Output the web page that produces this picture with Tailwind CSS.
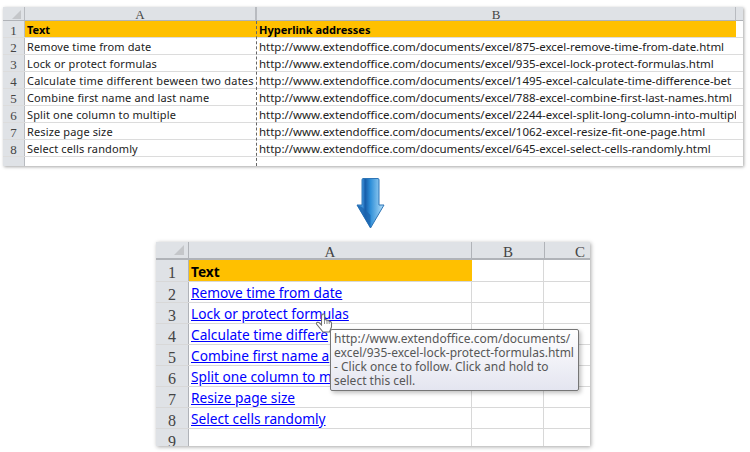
<!DOCTYPE html>
<html><head><meta charset="utf-8"><script src="https://cdn.jsdelivr.net/npm/@tailwindcss/browser@4"></script></head>
<body class="bg-white w-[750px] h-[452px] overflow-hidden font-['Noto_Sans',sans-serif] text-[#222]">
<div class="flex flex-col items-start h-full relative">
<!-- top sheet -->
<div class="relative mt-[7px] ml-[3px] w-[740px] h-[159px] shadow-[1px_1px_3px_rgba(0,0,0,0.35)] bg-white text-[11px] overflow-hidden leading-[18px]">
  <div class="flex h-[14px] bg-[#dfe2e6] border-b border-[#b0b3b8] font-['Liberation_Serif',serif] text-[13px] text-[#444]">
    <div class="w-[22px] border-r border-[#b8bbc0] relative"><svg class="absolute right-[3px] bottom-[1px]" width="9" height="9"><polygon points="9,0 9,9 0,9" fill="#c4c6c9"/></svg></div>
    <div class="w-[232px] border-r-2 border-[#b8bbc0] text-center leading-[15px]">A</div>
    <div class="w-[479px] border-r border-[#b8bbc0] text-center leading-[15px]">B</div>
  </div>
  <div class="flex h-[17px] border-b border-[#dcdcdc]"><div class="w-[22px] border-r border-[#b8bbc0] bg-[#dfe2e6] font-['Liberation_Serif',serif] text-[13px] leading-[20px] text-center text-[#444]">1</div><div class="w-[711px] flex bg-[#ffc000] font-bold text-black"><div class="w-[232px] pl-[2px]">Text</div><div class="pl-[2px]">Hyperlink addresses</div></div></div>
  <div class="flex h-[17px] border-b border-[#dcdcdc]"><div class="w-[22px] border-r border-[#b8bbc0] bg-[#dfe2e6] font-['Liberation_Serif',serif] text-[13px] leading-[20px] text-center text-[#444]">2</div><div class="w-[232px] pl-[2px] whitespace-nowrap tracking-[0.13px]">Remove time from date</div><div class="w-[479px] pl-[2px] whitespace-nowrap overflow-hidden text-[11.5px] tracking-[-0.02px]">http://www.extendoffice.com/documents/excel/875-excel-remove-time-from-date.html</div></div>
  <div class="flex h-[17px] border-b border-[#dcdcdc]"><div class="w-[22px] border-r border-[#b8bbc0] bg-[#dfe2e6] font-['Liberation_Serif',serif] text-[13px] leading-[20px] text-center text-[#444]">3</div><div class="w-[232px] pl-[2px] whitespace-nowrap tracking-[0.13px]">Lock or protect formulas</div><div class="w-[479px] pl-[2px] whitespace-nowrap overflow-hidden text-[11.5px] tracking-[-0.02px]">http://www.extendoffice.com/documents/excel/935-excel-lock-protect-formulas.html</div></div>
  <div class="flex h-[17px] border-b border-[#dcdcdc]"><div class="w-[22px] border-r border-[#b8bbc0] bg-[#dfe2e6] font-['Liberation_Serif',serif] text-[13px] leading-[20px] text-center text-[#444]">4</div><div class="w-[232px] pl-[2px] whitespace-nowrap tracking-[0.22px]">Calculate time different beween two dates</div><div class="w-[479px] pl-[2px] whitespace-nowrap overflow-hidden text-[11.5px] tracking-[-0.02px]">http://www.extendoffice.com/documents/excel/1495-excel-calculate-time-difference-bet</div></div>
  <div class="flex h-[17px] border-b border-[#dcdcdc]"><div class="w-[22px] border-r border-[#b8bbc0] bg-[#dfe2e6] font-['Liberation_Serif',serif] text-[13px] leading-[20px] text-center text-[#444]">5</div><div class="w-[232px] pl-[2px] whitespace-nowrap tracking-[0.13px]">Combine first name and last name</div><div class="w-[479px] pl-[2px] whitespace-nowrap overflow-hidden text-[11.5px] tracking-[-0.02px]">http://www.extendoffice.com/documents/excel/788-excel-combine-first-last-names.html</div></div>
  <div class="flex h-[17px] border-b border-[#dcdcdc]"><div class="w-[22px] border-r border-[#b8bbc0] bg-[#dfe2e6] font-['Liberation_Serif',serif] text-[13px] leading-[20px] text-center text-[#444]">6</div><div class="w-[232px] pl-[2px] whitespace-nowrap tracking-[0.13px]">Split one column to multiple</div><div class="w-[479px] pl-[2px] whitespace-nowrap overflow-hidden text-[11.5px] tracking-[-0.02px]">http://www.extendoffice.com/documents/excel/2244-excel-split-long-column-into-multipl</div></div>
  <div class="flex h-[17px] border-b border-[#dcdcdc]"><div class="w-[22px] border-r border-[#b8bbc0] bg-[#dfe2e6] font-['Liberation_Serif',serif] text-[13px] leading-[20px] text-center text-[#444]">7</div><div class="w-[232px] pl-[2px] whitespace-nowrap tracking-[0.13px]">Resize page size</div><div class="w-[479px] pl-[2px] whitespace-nowrap overflow-hidden text-[11.5px] tracking-[-0.02px]">http://www.extendoffice.com/documents/excel/1062-excel-resize-fit-one-page.html</div></div>
  <div class="flex h-[17px] border-b border-[#dcdcdc]"><div class="w-[22px] border-r border-[#b8bbc0] bg-[#dfe2e6] font-['Liberation_Serif',serif] text-[13px] leading-[20px] text-center text-[#444]">8</div><div class="w-[232px] pl-[2px] whitespace-nowrap tracking-[0.13px]">Select cells randomly</div><div class="w-[479px] pl-[2px] whitespace-nowrap overflow-hidden text-[11.5px] tracking-[-0.02px]">http://www.extendoffice.com/documents/excel/645-excel-select-cells-randomly.html</div></div>
  <div class="flex h-[9px]"><div class="w-[22px] border-r border-[#b8bbc0] bg-[#dfe2e6]"></div></div>
  <div class="absolute left-[253px] top-[14px] bottom-0 border-l border-dashed border-[#666]"></div>
</div>
<!-- arrow -->
<svg class="mt-[11px] ml-[356px]" width="29" height="52" viewBox="0 0 29 52">
  <defs><linearGradient id="g" x1="0" x2="1" y1="0" y2="0"><stop offset="0.2" stop-color="#3f94dc"/><stop offset="0.3" stop-color="#165ca8"/><stop offset="0.5" stop-color="#2f8fd8"/><stop offset="1" stop-color="#b8e2fb"/></linearGradient></defs>
  <path d="M7 1.5 H22 Q23 1.5 23 3 V28 H28 L14.5 51 L1 28 H6 V3 Q6 1.5 7 1.5 Z" fill="url(#g)" stroke="#2e75b6" stroke-width="1"/>
  <path d="M1 28 L14.5 51 L14.5 38 L6 30 Z" fill="#1c64ad" opacity="0.75"/>
</svg>
<!-- bottom sheet -->
<div class="relative mt-[13px] ml-[156px] w-[434px] h-[204px] shadow-[1px_1px_4px_rgba(0,0,0,0.35)] bg-white text-[13.7px] overflow-hidden leading-[22px]">
  <div class="flex h-[18px] bg-[#dfe2e6] border-b-2 border-[#b0b3b8] font-['Liberation_Serif',serif] text-[15px] text-[#444]">
    <div class="w-[33px] border-r border-[#b0b3b8] relative"><svg class="absolute right-[4px] bottom-[3px]" width="10" height="10"><polygon points="10,0 10,10 0,10" fill="#c4c6c9"/></svg></div>
    <div class="w-[282px] text-center leading-[20px]">A</div>
    <div class="w-[73px] border-l border-[#b0b3b8] text-center leading-[20px]">B</div>
    <div class="w-[46px] border-l border-[#b0b3b8] text-right pr-[5px] leading-[20px]">C</div>
  </div>
  <div class="flex h-[22px] border-b border-[#d8d8d8]"><div class="w-[33px] border-r border-[#b0b3b8] bg-[#dfe2e6] font-['Liberation_Serif',serif] text-[16px] leading-[25px] text-center text-[#444]">1</div><div class="w-[283px] pl-[2px] bg-[#ffc000] font-bold text-black leading-[23px]">Text</div><div class="w-[72px] border-r border-[#d8d8d8]"></div><div class="flex-1"></div></div>
  <div class="flex h-[21px] border-b border-[#d8d8d8]"><div class="w-[33px] border-r border-[#b0b3b8] bg-[#dfe2e6] font-['Liberation_Serif',serif] text-[16px] leading-[25px] text-center text-[#444]">2</div><div class="w-[283px] border-r border-[#d8d8d8] pl-[2px] whitespace-nowrap text-[#0000ff] underline">Remove time from date</div><div class="w-[72px] border-r border-[#d8d8d8]"></div><div class="flex-1"></div></div>
  <div class="flex h-[21px] border-b border-[#d8d8d8]"><div class="w-[33px] border-r border-[#b0b3b8] bg-[#dfe2e6] font-['Liberation_Serif',serif] text-[16px] leading-[25px] text-center text-[#444]">3</div><div class="w-[283px] border-r border-[#d8d8d8] pl-[2px] whitespace-nowrap text-[#0000ff] underline">Lock or protect formulas</div><div class="w-[72px] border-r border-[#d8d8d8]"></div><div class="flex-1"></div></div>
  <div class="flex h-[21px] border-b border-[#d8d8d8]"><div class="w-[33px] border-r border-[#b0b3b8] bg-[#dfe2e6] font-['Liberation_Serif',serif] text-[16px] leading-[25px] text-center text-[#444]">4</div><div class="w-[283px] border-r border-[#d8d8d8] pl-[2px] whitespace-nowrap text-[#0000ff] underline">Calculate time differe</div><div class="w-[72px] border-r border-[#d8d8d8]"></div><div class="flex-1"></div></div>
  <div class="flex h-[21px] border-b border-[#d8d8d8]"><div class="w-[33px] border-r border-[#b0b3b8] bg-[#dfe2e6] font-['Liberation_Serif',serif] text-[16px] leading-[25px] text-center text-[#444]">5</div><div class="w-[283px] border-r border-[#d8d8d8] pl-[2px] whitespace-nowrap text-[#0000ff] underline">Combine first name a</div><div class="w-[72px] border-r border-[#d8d8d8]"></div><div class="flex-1"></div></div>
  <div class="flex h-[21px] border-b border-[#d8d8d8]"><div class="w-[33px] border-r border-[#b0b3b8] bg-[#dfe2e6] font-['Liberation_Serif',serif] text-[16px] leading-[25px] text-center text-[#444]">6</div><div class="w-[283px] border-r border-[#d8d8d8] pl-[2px] whitespace-nowrap text-[#0000ff] underline">Split one column to m</div><div class="w-[72px] border-r border-[#d8d8d8]"></div><div class="flex-1"></div></div>
  <div class="flex h-[21px] border-b border-[#d8d8d8]"><div class="w-[33px] border-r border-[#b0b3b8] bg-[#dfe2e6] font-['Liberation_Serif',serif] text-[16px] leading-[25px] text-center text-[#444]">7</div><div class="w-[283px] border-r border-[#d8d8d8] pl-[2px] whitespace-nowrap text-[#0000ff] underline">Resize page size</div><div class="w-[72px] border-r border-[#d8d8d8]"></div><div class="flex-1"></div></div>
  <div class="flex h-[21px] border-b border-[#d8d8d8]"><div class="w-[33px] border-r border-[#b0b3b8] bg-[#dfe2e6] font-['Liberation_Serif',serif] text-[16px] leading-[25px] text-center text-[#444]">8</div><div class="w-[283px] border-r border-[#d8d8d8] pl-[2px] whitespace-nowrap text-[#0000ff] underline">Select cells randomly</div><div class="w-[72px] border-r border-[#d8d8d8]"></div><div class="flex-1"></div></div>
  <div class="flex h-[18px]"><div class="w-[33px] border-r border-[#b0b3b8] bg-[#dfe2e6] font-['Liberation_Serif',serif] text-[16px] leading-[25px] text-center text-[#444] overflow-hidden">9</div><div class="w-[283px] border-r border-[#d8d8d8]"></div><div class="w-[72px] border-r border-[#d8d8d8]"></div></div>
</div>
<!-- hand cursor -->
<svg class="absolute left-[315px] top-[313px]" width="18" height="20" viewBox="0 0 18 20"><path d="M7 1.5 C8 0.5 9.5 1 9.5 2.5 V7 C10.5 6.3 11.5 6.5 12 7.5 C13 7 14 7.5 14.2 8.5 C15.3 8 16.5 9 16.5 10.5 V14 L14.5 19 H8 L1.5 11 C1 9.5 3 8.5 4.5 10 L6.5 12 V3 Z" fill="#fff" stroke="#6e6e6e" stroke-width="1.1"/><path d="M9.5 7 V11 M12 7.5 V11 M14.2 8.5 V11" stroke="#8a8a8a"/></svg>
<!-- tooltip -->
<div class="absolute left-[330px] top-[329px] w-[249px] h-[62px] rounded-[2px] border border-[#767676] bg-gradient-to-b from-white to-[#e4e5f0] shadow-[2px_2px_4px_rgba(0,0,0,0.25)] pl-[3px] pt-[2px] text-[12px] leading-[14px] text-[#575757] font-['Noto_Sans',sans-serif]">http://www.extendoffice.com/documents/<br>excel/935-excel-lock-protect-formulas.html<br>- Click once to follow. Click and hold to<br>select this cell.</div>
</div>
</body></html>
